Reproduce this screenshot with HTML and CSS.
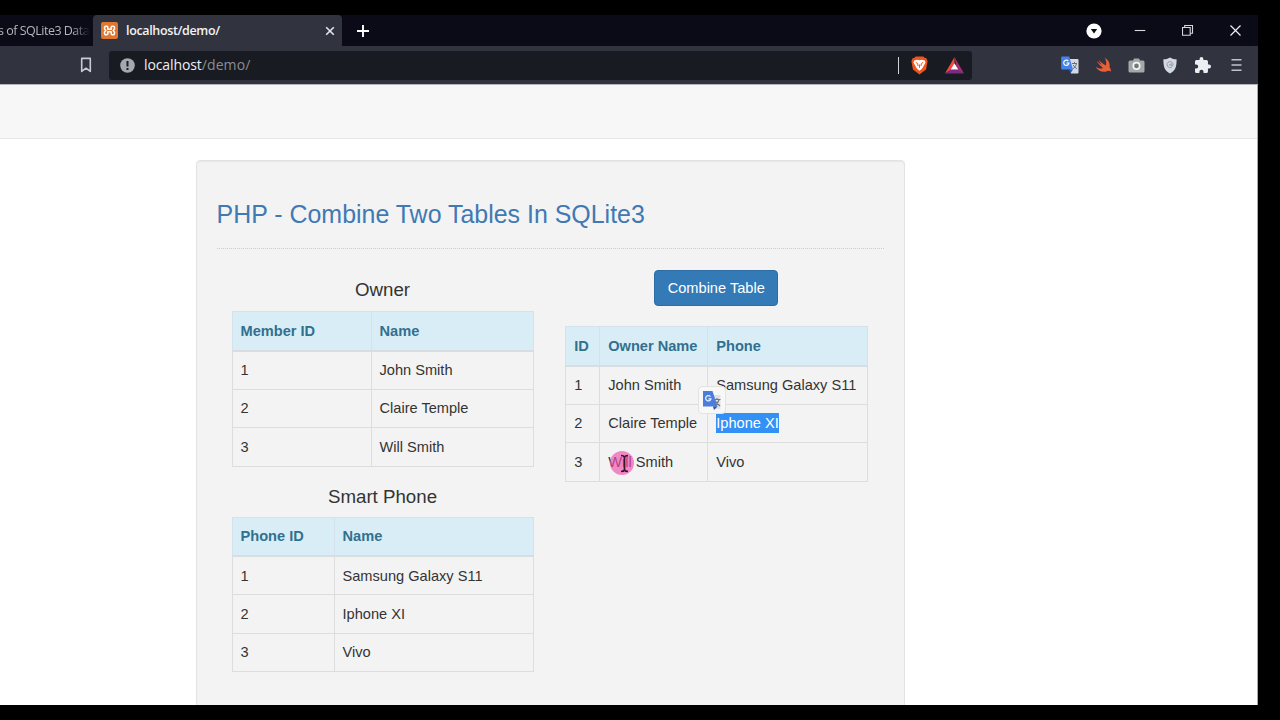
FILE: index.html
```
<!DOCTYPE html>
<html lang="en">
    <head>
        <meta charset="UTF-8">
        <meta name="viewport" content="width=device-width, initial-scale=1">
        <title>localhost/demo/</title>
        <link rel="stylesheet" href="styles.css">
    </head>
    <body>
        <div class="browser">
            <div class="tabs">
                <div class="tab-prev"><span>s of SQLite3 Data</span></div>
                <div class="tab">
                    <svg class="favicon" width="17" height="17" viewBox="0 0 17 17">
                        <rect width="17" height="17" rx="2" fill="#e2772f"/>
                        <path d="M6.800 7.300V5.200a1 1 0 0 0-1-1H5a1.500 1.500 0 0 0-1.500 1.500v1.200L4.800 8.500 3.500 10.100v1.200A1.500 1.500 0 0 0 5 12.800h.8a1 1 0 0 0 1-1V9.700h3.400v2.100a1 1 0 0 0 1 1h.8a1.500 1.500 0 0 0 1.500-1.500v-1.200L12.200 8.500l1.300-1.600V5.700A1.500 1.500 0 0 0 12 4.200h-.8a1 1 0 0 0-1 1v2.100z" fill="none" stroke="#fff" stroke-width="1.500" stroke-linejoin="round"/>
                    </svg>
                    <span class="tab-title">localhost/demo/</span>
                    <svg class="tab-close" width="10" height="10" viewBox="0 0 10 10">
                        <path d="M1.200 1.200l7.600 7.600M8.800 1.200L1.200 8.800" stroke="#e4e6e9" stroke-width="1.600"/>
                    </svg>
                </div>
                <svg class="new-tab" width="14" height="14" viewBox="0 0 14 14">
                    <path d="M7 1v12M1 7h12" stroke="#fff" stroke-width="1.900"/>
                </svg>
                <div class="window-buttons">
                    <svg width="16" height="16" viewBox="0 0 16 16">
                        <circle cx="8" cy="8" r="7.600" fill="#fff"/>
                        <path d="M4.800 6h6.400L8 10.600z" fill="#0a0b16"/>
                    </svg>
                    <svg width="12" height="12" viewBox="0 0 12 12">
                        <path d="M.7 5.500h10.600" stroke="#d6d7da" stroke-width="1.100"/>
                    </svg>
                    <svg width="12" height="12" viewBox="0 0 12 12">
                        <path d="M.5 2.500h7.700v7.700H.5zM2.700 2.500V.5h7.800v7.700H8.500" fill="none" stroke="#d6d7da" stroke-width="1.100"/>
                    </svg>
                    <svg width="12" height="12" viewBox="0 0 12 12">
                        <path d="M.5.5l10 10M10.500.5l-10 10" stroke="#f0f0f2" stroke-width="1.200"/>
                    </svg>
                </div>
            </div>

            <div class="toolbar">
                <svg class="bookmark" width="12" height="16" viewBox="0 0 12 16">
                    <path d="M1.700 1.400h8.600v13L6 11.200l-4.300 3.200z" fill="none" stroke="#c9ccd2" stroke-width="1.600" stroke-linejoin="round"/>
                </svg>
                <div class="address">
                    <svg width="15" height="15" viewBox="0 0 15 15">
                        <circle cx="7.500" cy="7.500" r="7.300" fill="#a4a8b0"/>
                        <path d="M7.500 3v5.400M7.500 10.100v2" stroke="#1b1e26" stroke-width="2"/>
                    </svg>
                    <span class="url">localhost<span>/demo/</span></span>
                    <div class="shields">
                        <svg width="17" height="19" viewBox="0 0 17 19">
                            <path d="M4.700.5h7.600l1.500 1.600 1.400-.1 1.400 3-1.500 8.600L8.500 18.600 1.900 13.600.4 5l1.400-3 1.400.1z" fill="#ee5420"/>
                            <path d="M3.200 4.400l3.100-.6 2.200.5 2.200-.5 3.100.6.7 2.200-2.600 4.600-1.100 1.700-2.300 1.900-2.300-1.900-1.100-1.700L2.500 6.600z" fill="#fff"/>
                            <path d="M4.700 6.300l2 1.200.3 2.600M12.300 6.300l-2 1.200-.3 2.600M8.500 8.500v3.300" stroke="#ee5420" stroke-width="1" fill="none"/>
                        </svg>
                        <svg width="19" height="17" viewBox="0 0 19 17">
                            <path d="M9.500 0L0 16.500l9.500-6z" fill="#f2493b"/>
                            <path d="M0 16.500h19l-5.600-4.200H6.200z" fill="#7a2a82"/>
                            <path d="M9.500 0L19 16.500l-7-4z" fill="#a0306e"/>
                            <path d="M9.500 6.200L5.800 12.600h7.400z" fill="#fff"/>
                        </svg>
                    </div>
                </div>
                <div class="extensions">
                    <svg width="18" height="18" viewBox="0 0 18 18">
                        <path d="M7 3h9.500a1 1 0 0 1 1 1v12.500a1 1 0 0 1-1 1H10z" fill="#d5dae2"/>
                        <path d="M11 7.500h5M13.500 6v1.500M15.400 8c-.6 2.300-2 3.700-3.500 4.800M12 9l3.800 4" stroke="#66707c" stroke-width="1" fill="none"/>
                        <path d="M1.200.5h7L12 13.500H1.200a1 1 0 0 1-1-1v-11a1 1 0 0 1 1-1z" fill="#4384ec"/>
                        <path d="M7.500 13.500H12L9.600 17z" fill="#2859b5"/>
                        <path d="M7.300 5.100A2.600 2.600 0 1 0 7.900 7H5.400" stroke="#fff" stroke-width="1.200" fill="none"/>
                    </svg>
                    <svg width="17" height="16" viewBox="0 0 17 16">
                        <path d="M9.700.5c4.200 3 5.500 6.600 4.800 9.400 1.500 1.900 1.600 3.700 1.200 4.900-1.200-1.700-2.400-1.200-4-.5C7.900 15.800 3 14 .6 9.700c2.500 1.800 5.100 2.300 7.400 1.300C5.100 8.800 3 6.300 1.700 4.100c2.100 1.800 4.100 3.200 5.400 4C5.500 6.200 4.300 4.500 3.600 2.900 6 5.200 8.900 7.400 10.900 8.500c.8-2.500.2-5.300-1.200-8z" fill="#e85f38"/>
                    </svg>
                    <svg width="17" height="15" viewBox="0 0 17 15">
                        <path d="M2 2.600h3l1-2.200h5l1 2.200h3a1.500 1.500 0 0 1 1.500 1.500V13a1.500 1.500 0 0 1-1.500 1.500H2A1.500 1.500 0 0 1 .5 13V4.100A1.500 1.500 0 0 1 2 2.600z" fill="#a5a7a9"/>
                        <circle cx="8.500" cy="7.900" r="3.200" fill="#777" stroke="#f4f4f4" stroke-width="1.700"/>
                    </svg>
                    <svg width="14" height="17" viewBox="0 0 14 17">
                        <path d="M7 .4c2 1.400 4.300 1.800 6.600 1.800 0 7.300-.8 11-6.600 14.400C1.200 13.200.4 9.500.4 2.200 2.700 2.200 5 1.800 7 .4z" fill="#d3d8e1"/>
                        <path d="M9.300 9.500A3 3 0 1 1 10 7.700c0 1.700-1.700 1.700-1.700.2V6.300" fill="none" stroke="#8f9bb0" stroke-width="1"/>
                        <circle cx="7" cy="7.800" r="1.100" fill="#a3aec0"/>
                    </svg>
                    <svg width="16" height="16" viewBox="2 1 21 21">
                        <path d="M20.500 11H19V7a2 2 0 0 0-2-2h-4V3.500a2.500 2.500 0 0 0-5 0V5H4a2 2 0 0 0-2 2v3.800h1.500a2.700 2.700 0 0 1 0 5.400H2V20a2 2 0 0 0 2 2h3.800v-1.500a2.700 2.700 0 0 1 5.400 0V22H17a2 2 0 0 0 2-2v-4h1.500a2.500 2.500 0 0 0 0-5z" fill="#eceef1"/>
                    </svg>
                    <svg width="11" height="14" viewBox="0 0 11 14">
                        <path d="M.5 1.700h10M.5 7h10M.5 12.300h10" stroke="#bfc2c9" stroke-width="1.600"/>
                    </svg>
                </div>
            </div>

            <div class="page">
                <nav class="navbar"></nav>
                <div class="well">
                    <h3>PHP - Combine Two Tables In SQLite3</h3>
                    <hr>
                    <div class="row">
                        <div class="col">
                            <h4>Owner</h4>
                            <table class="table owner">
                                <thead>
                                    <tr><th>Member ID</th><th>Name</th></tr>
                                </thead>
                                <tbody>
                                    <tr><td>1</td><td>John Smith</td></tr>
                                    <tr><td>2</td><td>Claire Temple</td></tr>
                                    <tr><td>3</td><td>Will Smith</td></tr>
                                </tbody>
                            </table>
                            <h4>Smart Phone</h4>
                            <table class="table phone">
                                <thead>
                                    <tr><th>Phone ID</th><th>Name</th></tr>
                                </thead>
                                <tbody>
                                    <tr><td>1</td><td>Samsung Galaxy S11</td></tr>
                                    <tr><td>2</td><td>Iphone XI</td></tr>
                                    <tr><td>3</td><td>Vivo</td></tr>
                                </tbody>
                            </table>
                        </div>
                        <div class="col">
                            <button class="btn">Combine Table</button>
                            <table class="table combined">
                                <thead>
                                    <tr><th>ID</th><th>Owner Name</th><th>Phone</th></tr>
                                </thead>
                                <tbody>
                                    <tr><td>1</td><td>John Smith</td><td>Samsung Galaxy S11</td></tr>
                                    <tr>
                                        <td>2</td>
                                        <td>Claire Temple</td>
                                        <td>
                                            <span class="selected">Iphone XI<span class="translate">
                                                <svg width="20" height="20" viewBox="0 0 20 20">
                                                    <path d="M10 5h8.500v14H13z" fill="#dfe1e4"/>
                                                    <path d="M12 9.500h6.500M15 8v1.500M17 10c-.7 2.500-2 4-4 5.500M13 11l5 5" stroke="#73777d" stroke-width="1.200" fill="none"/>
                                                    <path d="M1 1h9.500l5 15.500H1z" fill="#4a7ddc"/>
                                                    <path d="M11 16.500h4.500L12 20z" fill="#2d4fa3"/>
                                                    <path d="M8.500 6.600A2.700 2.700 0 1 0 9 8.800H6.400" stroke="#e6eeff" stroke-width="1.300" fill="none"/>
                                                </svg>
                                            </span></span>
                                        </td>
                                    </tr>
                                    <tr>
                                        <td>3</td>
                                        <td><span class="hovered">Will<svg class="cursor" width="26" height="26" viewBox="0 0 26 26">
                                            <circle cx="13" cy="13" r="12" fill="#f04fae" fill-opacity=".65"/>
                                            <path d="M12 5.500c2 0 3 .6 3.500 1.500.5-.9 1.500-1.500 3.500-1.500M15.500 7v13M12 21.500c2 0 3-.6 3.500-1.500.5.9 1.500 1.500 3.500 1.500" stroke="#3a1530" stroke-width="1.700" fill="none"/>
                                        </svg></span> Smith</td>
                                        <td>Vivo</td>
                                    </tr>
                                </tbody>
                            </table>
                        </div>
                    </div>
                </div>
            </div>
        </div>
    </body>
</html>
```
FILE: styles.css
```
* {
    box-sizing: border-box;
}

body {
    margin: 0;
    height: 720px;
    padding: 15px 22px 15px 0;
    background: #000;
    overflow: hidden;
    font-family: "Liberation Sans", Arial, sans-serif;
    font-size: 14.6px;
    color: #333;
}

svg {
    display: block;
    flex-shrink: 0;
}

.browser {
    display: flex;
    flex-direction: column;
    height: 690px;
    overflow: hidden;
}

/* Tab strip */
.tabs {
    display: flex;
    align-items: center;
    height: 31px;
    background: #0a0b16;
    font-family: "Open Sans", "Noto Sans", sans-serif;
    font-size: 12.5px;
    letter-spacing: -.35px;
}
.tab-prev {
    width: 93px;
    white-space: nowrap;
    color: #b4b6ba;
    -webkit-mask-image: linear-gradient(to right, #000 72px, transparent 90px);
    mask-image: linear-gradient(to right, #000 72px, transparent 90px);
}
.tab-prev span {
    margin-left: -2px;
    letter-spacing: -.5px;
}
.tab {
    display: flex;
    align-items: center;
    width: 249px;
    height: 31px;
    padding: 0 7px 0 8px;
    border-radius: 4px 4px 0 0;
    background: #31343f;
    color: #f1f2f4;
}
.tab-title {
    margin-left: 8px;
    font-weight: 600;
}
.tab-close {
    margin-left: auto;
}
.new-tab {
    margin-left: 14px;
}
.window-buttons {
    display: flex;
    align-items: center;
    gap: 36px;
    margin-left: auto;
    padding-right: 16px;
}
.window-buttons svg:first-child {
    margin-right: -4px;
}

/* Toolbar */
.toolbar {
    display: flex;
    align-items: center;
    height: 38px;
    padding: 0 5px 0 80px;
    background: #31343f;
}
.address {
    display: flex;
    align-items: center;
    width: 863px;
    height: 29px;
    margin-left: 17px;
    padding: 0 8px 0 11px;
    border-radius: 3px;
    background: #191b22;
}
.url {
    margin-left: 9px;
    font-family: "Open Sans", "Noto Sans", sans-serif;
    font-size: 14px;
    line-height: 18px;
    padding-bottom: 1px;
    color: #eeeff1;
    letter-spacing: -.1px;
}
.url span {
    color: #8b8d93;
    letter-spacing: .1px;
}
.shields {
    display: flex;
    align-items: center;
    gap: 17px;
    height: 17px;
    margin-left: auto;
    padding-left: 12px;
    border-left: 1px solid #d2d3d6;
}
.extensions {
    display: grid;
    grid-template-columns: repeat(6, 33.2px);
    place-items: center;
    margin-left: auto;
}

/* Page */
.page {
    flex: 1;
    min-height: 0;
    overflow: hidden;
    border-top: 1px solid #b5b6ba;
    border-right: 1px solid #aaa;
    background: #fff;
}
.navbar {
    height: 54px;
    border-bottom: 1px solid #e7e7e7;
    background: #f7f7f7;
}
.well {
    width: 709px;
    height: 600px;
    margin: 21px 0 0 196px;
    padding: 20px 20px 20px 19.5px;
    border: 1px solid #e3e3e3;
    border-radius: 4px;
    background: #f3f3f3;
    box-shadow: inset 0 1px 1px rgba(0, 0, 0, .05);
}
h3 {
    margin: 20px 0 0;
    font-size: 24.95px;
    font-weight: 500;
    line-height: 27px;
    color: #4079b4;
}
hr {
    margin: 20px 0;
    border: 0;
    border-top: 1px dotted #ccc;
}
.row {
    display: flex;
}
.col {
    display: flex;
    flex-direction: column;
    align-items: flex-start;
    width: 335px;
    padding: 0 15px;
}
.col:last-child {
    width: 333px;
    padding: 0 14px;
}
h4 {
    width: 302px;
    margin: 10px 0 11px;
    font-size: 18.7px;
    font-weight: 500;
    line-height: 21px;
    text-align: center;
}
.table {
    width: 302px;
    margin-bottom: 9px;
    border: 1px solid #ddd;
    border-collapse: collapse;
    table-layout: fixed;
}
.table th,
.table td {
    height: 38.5px;
    padding: 0 8px;
    border: 1px solid #ddd;
    text-align: left;
    white-space: nowrap;
}
.table th {
    height: 39px;
    border-color: #d3e3e9;
    border-bottom: 2px solid #d7dde0;
    background: #d9edf7;
    color: #31708f;
}
.owner th:first-child {
    width: 139px;
}
.phone {
    margin-top: -1px;
}
.phone th:first-child {
    width: 102px;
}
.combined {
    width: 303px;
}
.combined th:first-child {
    width: 34px;
}
.combined th:nth-child(2) {
    width: 108px;
}
.btn {
    width: 124px;
    height: 36px;
    margin: 1px 0 20px 89px;
    padding: 0;
    border: 1px solid #2e6da4;
    border-radius: 4px;
    background: #337ab7;
    font: inherit;
    color: #fff;
}

/* Selection, with the translate popup over its corner */
.selected {
    position: relative;
    display: inline-block;
    line-height: 20px;
    background: #3390f5;
    color: #fff;
}
.translate {
    position: absolute;
    top: -27px;
    left: -18px;
    padding: 3px;
    border: 1px solid #e3e3e3;
    border-radius: 4px;
    background: #f8f8f8;
}
.hovered {
    position: relative;
}
.cursor {
    position: absolute;
    top: -4px;
    left: 1px;
}
```
